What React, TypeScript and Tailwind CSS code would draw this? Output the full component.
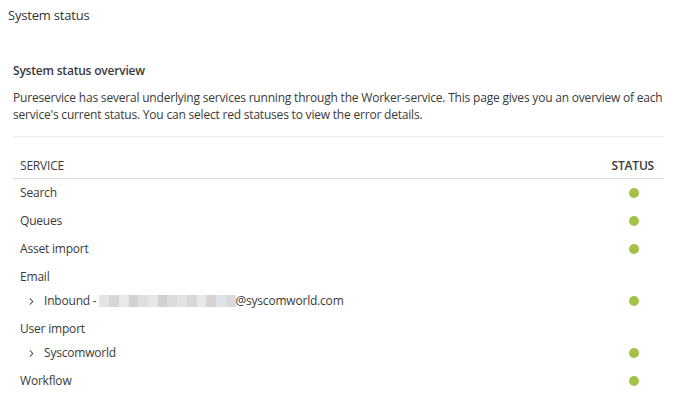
import { ChevronRight } from 'lucide-react';

type Row = {
  name: string;
  ok?: boolean;
  children?: { name: React.ReactNode; ok: boolean }[];
};

const rows: Row[] = [
  { name: 'Search', ok: true },
  { name: 'Queues', ok: true },
  { name: 'Asset import', ok: true },
  {
    name: 'Email',
    children: [
      {
        name: (
          <span className="inline-flex items-center">
            Inbound -&nbsp;
            <BlurredText />
            @syscomworld.com
          </span>
        ),
        ok: true,
      },
    ],
  },
  { name: 'User import', children: [{ name: 'Syscomworld', ok: true }] },
  { name: 'Workflow', ok: true },
];

// pixelated "redacted" local part of the address
function BlurredText() {
  const blocks = ['#e4e4e4', '#d6d6d6', '#e9e9e9', '#d2d2d2', '#dedede', '#e6e6e6', '#d0d0d0', '#dcdcdc', '#e2e2e2', '#d8d8d8', '#e8e8e8', '#d4d4d4', '#dfe3e6', '#dadada'];
  return (
    <span className="inline-flex h-[12px] w-[136px]">
      {blocks.map((c, i) => (
        <span key={i} className="h-full flex-1" style={{ backgroundColor: c }} />
      ))}
    </span>
  );
}

function Dot() {
  return <span className="block h-[10px] w-[10px] rounded-full bg-[#a4c24a]" />;
}

export default function App() {
  return (
    <div className="h-[403px] w-[677px] bg-white text-[12px] tracking-[-0.2px] text-[#3a3a3a] font-['Open_Sans',sans-serif]">
      <div className="pl-[8px] pt-[6px] text-[13px] leading-[18px] text-[#333]">System status</div>
      <div className="px-[13px] pt-[39px]">
        <h2 className="text-[12px] font-semibold leading-[16px]">System status overview</h2>
        <p className="mt-[10px] leading-[17px]">
          Pureservice has several underlying services running through the Worker-service. This page gives you an overview of each service's current status. You can select red statuses to view the error details.
        </p>
        <div className="mt-[13px] border-t border-[#ebebeb]" />
        <div className="mt-[21px] flex items-end justify-between border-b border-[#dcdcdc] pb-[4px] pl-[7px] pr-[10px] leading-[16px]">
          <span>SERVICE</span>
          <span className="font-semibold">STATUS</span>
        </div>
        <div className="flex flex-col">
          {rows.map((r) => (
            <div key={r.name}>
              <div className="flex h-[28px] items-center justify-between pl-[7px] pr-[25px]">
                <span>{r.name}</span>
                {r.ok && <Dot />}
              </div>
              {r.children?.map((c, i) => (
                <div key={i} className="-mt-[4px] flex h-[28px] items-center justify-between pl-[13px] pr-[25px]">
                  <span className="flex items-center gap-[7px]">
                    <ChevronRight className="h-[11px] w-[11px] text-[#333]" strokeWidth={2.25} />
                    {c.name}
                  </span>
                  {c.ok && <Dot />}
                </div>
              ))}
            </div>
          ))}
        </div>
      </div>
    </div>
  );
}
